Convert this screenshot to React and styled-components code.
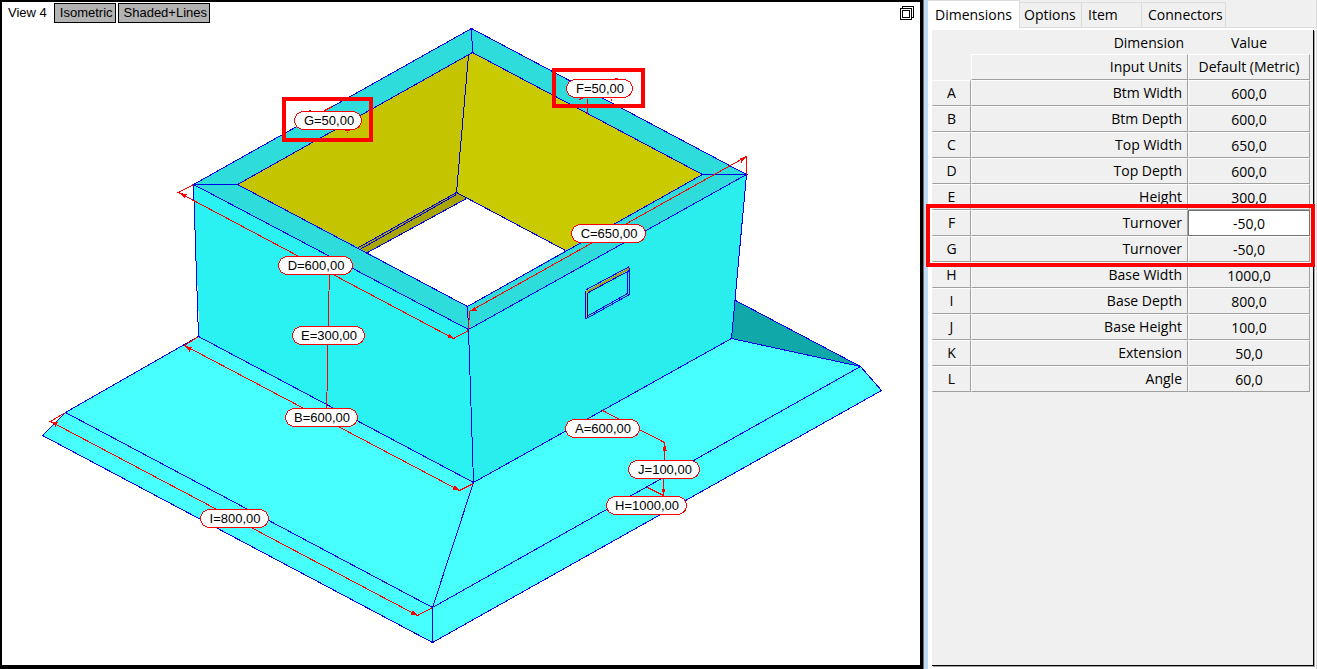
import React from "react";
import styled, { createGlobalStyle } from "styled-components";

const GlobalStyle = createGlobalStyle`
  * { box-sizing: border-box; }
  body { margin: 0; background: #fff; }
  button, input { font: inherit; color: inherit; }
`;

const uiFont = `"Open Sans", "Noto Sans", sans-serif`;
const viewFont = `"Liberation Sans", Arial, sans-serif`;

const Window = styled.div`
  display: flex;
  min-height: 100vh;
  color: #000;
`;

const Viewport = styled.main`
  position: relative;
  flex: 1;
  min-width: 0;
  display: flex;
  background: #fff;
  border: solid #000;
  border-width: 2px 3px 4px 2px;
  font: 13px/18px ${viewFont};
`;

const ViewBar = styled.div`
  position: absolute;
  inset: 0 0 auto 0;
  display: flex;
  align-items: center;
  gap: 2px;
  padding: 1px 6px;
`;

const ViewName = styled.span`
  margin-right: 5px;
`;

const ModeButton = styled.button`
  height: 20px;
  padding: 0 2px 0 5px;
  border: 1px solid #000;
  background: #b3b3b3;
  line-height: 18px;
`;

const RestoreButton = styled.button`
  display: flex;
  margin-left: auto;
  padding: 0;
  border: 0;
  background: none;
`;

const Scene = styled.svg`
  display: block;
  flex: 1;
  min-width: 0;
  shape-rendering: crispEdges;
`;

const Splitter = styled.div`
  width: 5px;
  background: #bddcf4;
  border-left: 1px solid #707070;
`;

const SidePanel = styled.aside`
  flex: none;
  width: 389px;
  display: flex;
  flex-direction: column;
  background: #fff;
  border-right: 1px solid #dcdcdc;
  font: 14px/20px ${uiFont};
`;

const TabList = styled.div`
  display: flex;
  align-items: flex-end;
  height: 28px;
  background: #f0f0f0;
`;

const Tab = styled.button`
  height: ${(p) => (p.$active ? 28 : 26)}px;
  width: ${(p) => p.$width}px;
  padding: 0 0 0 ${(p) => p.$inset}px;
  text-align: left;
  white-space: nowrap;
  background: ${(p) => (p.$active ? "#fff" : "#f0f0f0")};
  border: solid #dcdcdc;
  border-width: ${(p) => (p.$active ? "1px 1px 0 0" : "1px 1px 1px 0")};
`;

const TabFill = styled.div`
  flex: 1;
  height: 28px;
  border-bottom: 1px solid #dcdcdc;
`;

const Page = styled.section`
  flex: 1;
  margin: 2px 2px 3px 4px;
  padding-right: 3px;
  background: #f0f0f0;
  border: solid #000;
  border-width: 0 1px 1px 0;
  box-shadow: 1px 1px 0 #a0a0a0;
`;

const Grid = styled.table`
  width: 100%;
  border-collapse: separate;
  border-spacing: 0;
  table-layout: fixed;
`;

const HeadCell = styled.th`
  height: 24px;
  padding: ${(p) => (p.$align ? "2px 4px 0 0" : "2px 0 0")};
  font-weight: normal;
  text-align: ${(p) => p.$align || "center"};
`;

const Cell = styled.td`
  height: 26px;
  padding: 0 5px 0 0;
  text-align: ${(p) => p.$align || "center"};
  border: solid;
  border-width: 1px;
  border-color: #fff #a0a0a0 #a0a0a0 #fff;
`;

const ValueCell = styled(Cell)`
  padding: 0;
`;

const KeyCell = styled(Cell)`
  padding: 0;
  border-left-color: #f0f0f0;
`;

const CornerCell = styled.td`
  padding: 0;
`;

const ValueInput = styled.input`
  display: block;
  width: 100%;
  height: 24px;
  padding: 0;
  border: 0;
  border-radius: 0;
  outline: 0;
  text-align: center;
  background: ${(p) => (p.$editing ? "#fff" : "transparent")};
  box-shadow: ${(p) => (p.$editing ? "0 0 0 1px #6e7373" : "none")};
`;

const RowGroup = styled.tbody`
  ${(p) =>
    p.$marked &&
    `position: relative;
    z-index: 1;
    &::after {
      content: "";
      position: absolute;
      inset: -6px -5px -5px -6px;
      border: 4px solid #f00;
      pointer-events: none;
    }`}
`;

const rowGroups = [
  {
    rows: [
      ["A", "Btm Width", "600,0"],
      ["B", "Btm Depth", "600,0"],
      ["C", "Top Width", "650,0"],
      ["D", "Top Depth", "600,0"],
      ["E", "Height", "300,0"],
    ],
  },
  {
    marked: true,
    rows: [
      ["F", "Turnover", "-50,0"],
      ["G", "Turnover", "-50,0"],
    ],
  },
  {
    rows: [
      ["H", "Base Width", "1000,0"],
      ["I", "Base Depth", "800,0"],
      ["J", "Base Height", "100,0"],
      ["K", "Extension", "50,0"],
      ["L", "Angle", "60,0"],
    ],
  },
];

const tabs = [
  { name: "Dimensions", width: 92, inset: 7 },
  { name: "Options", width: 62, inset: 4 },
  { name: "Item", width: 60, inset: 6 },
  { name: "Connectors", width: 84, inset: 6 },
];

const faces = [
  ["#48ffff", "199,336 65,412 43,435 432,642 881,390 860,366 731,338 474,482"],
  ["#10a8a8", "735,300 860,366 731,338"],
  ["#2af2f2", "193,184 468,329 474,482 199,336"],
  ["#2aeeee", "468,329 746,174 731,338 474,482"],
  ["#2fdcdc", "471,28 746,174 468,329 193,184"],
  ["#c4c400", "472,52 237,184 358,247 456,192 468,55"],
  ["#caca00", "472,52 702,174 565,250 456,192 468,55"],
  ["#a8a400", "456,192 466,198 367,252 358,247"],
  ["#ffffff", "466,198 565,250 467,306 367,252"],
];

const edges = [
  "M193 184L471 28L746 174L468 329Z",
  "M237 184L472 52L702 174L467 306Z",
  "M193 184H237M471 28L472 52M702 174H746M467 306L468 329",
  "M468 55L456 192L358 247M456 194L361 248M456 192L565 250M466 198L367 252",
  "M193 184L198 336L473 482L731 338L746 174M468 329L473 482",
  "M198 336L65 412L42 435L432 642L881 390L860 366L731 338",
  "M65 412L432 607L860 366M432 607V642M473 482L432 607M735 300L860 366",
  "M586 289L629 266M588 292L629 270M585 290V318M587 292V316M586 318L629 294M588 315L627 293M629 267V294M627 271V293",
];

const measures = [
  "M746 174V156L469 311L468 329",
  "M193 184L178 192L453 338L468 330",
  "M329 266L326 417",
  "M198 336L184 345L459 490L473 483",
  "M65 412L50 421L417 615L432 607",
  "M602 410L664 442L663 495L647 487",
  "M324 110L332 106M308 110H310M344 130H349M347 131V132",
  "M587 98V113M579 99L583 97M609 79H611M614 78H617M611 98V100",
];

const arrows = [
  "746,156 739,158 741,162",
  "469,311 474,306 476,310",
  "178,192 186,194 184,198",
  "453,338 449,333 447,337",
  "184,345 191,347 189,351",
  "459,490 454,485 452,489",
  "51,421 57,422 55,426",
  "417,615 412,610 410,614",
  "664,442 662,450 666,450",
  "663,495 661,488 665,488",
];

const callouts = [
  ["F=50,00", 566, 79, 66],
  ["G=50,00", 294, 111, 67],
  ["C=650,00", 571, 224, 74],
  ["D=600,00", 278, 256, 74],
  ["E=300,00", 292, 326, 72],
  ["B=600,00", 285, 408, 72],
  ["A=600,00", 565, 419, 74],
  ["J=100,00", 628, 460, 71],
  ["H=1000,00", 606, 496, 80],
  ["I=800,00", 200, 509, 68],
];

function Callout({ text, x, y, width }) {
  return (
    <g>
      <rect x={x} y={y} width={width} height="18" rx="9" fill="#fff" stroke="#f00" transform="translate(0.5 0.5)" />
      <text x={x + Math.ceil(width / 2) + 1} y={y + 14} textAnchor="middle" fontSize="13" fill="#000">
        {text}
      </text>
    </g>
  );
}

function Model() {
  return (
    <Scene viewBox="2 2 918 663" role="img" aria-label="Isometric model with dimensions">
      <g transform="translate(0.5 0.5)">
        {faces.map(([fill, points]) => (
          <polygon key={points} points={points} fill={fill} />
        ))}
        <g fill="none">
          <path d="M587 291L629 268" stroke="#a89c10" strokeWidth="2" />
          <path d="M586 290V317" stroke="#c4c400" />
        </g>
        <g fill="none" stroke="#0000e8">
          {edges.map((d) => (
            <path key={d} d={d} />
          ))}
        </g>
        <g fill="none" stroke="#f00">
          {measures.map((d) => (
            <path key={d} d={d} />
          ))}
        </g>
        {arrows.map((points) => (
          <polygon key={points} points={points} fill="#f00" />
        ))}
      </g>
      {callouts.map(([text, x, y, width]) => (
        <Callout key={text} text={text} x={x} y={y} width={width} />
      ))}
      <g fill="none" stroke="#f00" strokeWidth="4">
        <rect x="284" y="99" width="87" height="41" />
        <rect x="554" y="70" width="89" height="36" />
      </g>
    </Scene>
  );
}

export default function App() {
  return (
    <>
      <GlobalStyle />
      <Window>
        <Viewport>
          <Model />
          <ViewBar>
            <ViewName>View 4</ViewName>
            <ModeButton type="button">Isometric</ModeButton>
            <ModeButton type="button">Shaded+Lines</ModeButton>
            <RestoreButton type="button" aria-label="Restore view">
              <svg width="14" height="14" viewBox="0 0 14 14" fill="none" stroke="#000" shapeRendering="crispEdges">
                <path d="M2.5 2V0.5H13.5V11.5H12M0.5 2.5H11.5V13.5H0.5ZM2.5 4.5H9.5V11.5H2.5Z" />
              </svg>
            </RestoreButton>
          </ViewBar>
        </Viewport>
        <Splitter />
        <SidePanel>
          <TabList role="tablist">
            {tabs.map((tab, i) => (
              <Tab key={tab.name} type="button" role="tab" aria-selected={i === 0} $active={i === 0} $width={tab.width} $inset={tab.inset}>
                {tab.name}
              </Tab>
            ))}
            <TabFill />
          </TabList>
          <Page>
            <Grid>
              <colgroup>
                <col width="39" />
                <col />
                <col width="122" />
              </colgroup>
              <thead>
                <tr>
                  <HeadCell />
                  <HeadCell $align="right">Dimension</HeadCell>
                  <HeadCell>Value</HeadCell>
                </tr>
                <tr>
                  <CornerCell />
                  <Cell $align="right">Input Units</Cell>
                  <ValueCell>Default (Metric)</ValueCell>
                </tr>
              </thead>
              {rowGroups.map((group) => (
                <RowGroup key={group.rows[0][0]} $marked={group.marked}>
                  {group.rows.map(([key, name, value]) => (
                    <tr key={key}>
                      <KeyCell>{key}</KeyCell>
                      <Cell $align="right">{name}</Cell>
                      <ValueCell>
                        <ValueInput aria-label={`${key} ${name}`} defaultValue={value} $editing={key === "F"} />
                      </ValueCell>
                    </tr>
                  ))}
                </RowGroup>
              ))}
            </Grid>
          </Page>
        </SidePanel>
      </Window>
    </>
  );
}
